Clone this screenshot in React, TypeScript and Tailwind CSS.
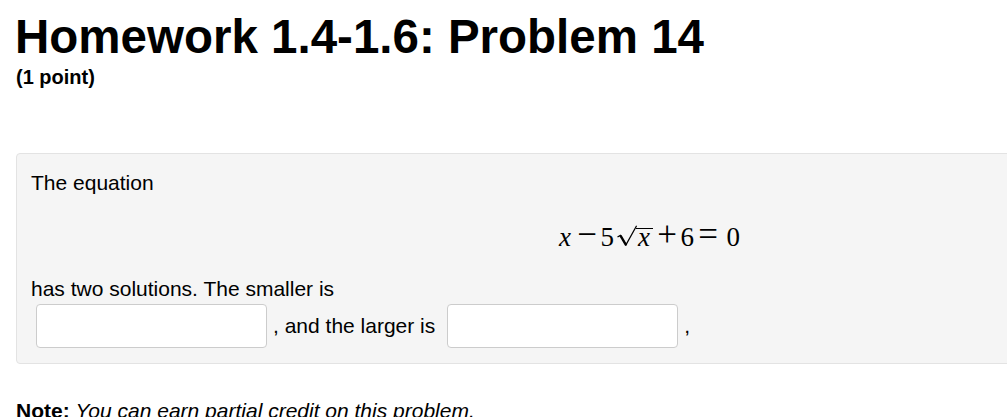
import React from "react";

const sans = { fontFamily: '"Liberation Sans", Arial, sans-serif' };

function Radical() {
  return (
    <svg width="20" height="21" viewBox="0 0 20 21" className="-mb-[2px] block">
      <path
        d="M0.5 12 L3.4 10.4 L9 19.8 L19.6 0.7"
        fill="none"
        stroke="#000"
        strokeWidth="1.3"
      />
      <path d="M3.5 10.6 L9.2 20.4" stroke="#000" strokeWidth="2.3" />
    </svg>
  );
}

// operators are set larger than the digits so they match the TeX glyph sizes
function Op({ children, className }: { children: React.ReactNode; className?: string }) {
  return (
    <span className={"inline-block w-[21px] text-center text-[35px] leading-[20px] " + (className ?? "")}>
      {children}
    </span>
  );
}

function Equation() {
  return (
    <div
      className="flex h-[34px] items-baseline justify-center text-[27px] leading-[34px] text-black"
      style={{ fontFamily: '"Liberation Serif", "Times New Roman", serif' }}
    >
      <span className="inline-block w-[13px] text-center italic">x</span>
      <Op className="ml-[5px]">−</Op>
      <span className="ml-[3px] inline-block w-[12px] text-center">5</span>
      <span className="ml-[4px] flex items-baseline">
        <Radical />
        <span className="-ml-[1px] inline-block w-[17px] border-t-[1.4px] border-black text-center leading-[17px] italic">
          x
        </span>
      </span>
      <Op className="ml-[4px]">+</Op>
      <span className="ml-[3px] inline-block w-[12px] text-center">6</span>
      <Op className="ml-[5px]">=</Op>
      <span className="ml-[8px] inline-block w-[12px] text-center">0</span>
    </div>
  );
}

function AnswerBox() {
  return (
    <input
      type="text"
      className="h-[44px] w-[231px] rounded-[4px] border border-[#cccccc] bg-white px-2 outline-none"
    />
  );
}

export default function App() {
  return (
    <div className="w-screen overflow-hidden bg-white text-black" style={sans}>
      <div className="pl-[16px] pt-[11px]">
        <h1 className="-ml-[1px] text-[47.5px] font-bold leading-[52px]">
          Homework 1.4-1.6: Problem 14
        </h1>
        <p className="mt-[2px] text-[20px] font-bold leading-[24px]">(1 point)</p>

        <div className="mt-[64px] w-[1265px] rounded-[4px] border border-[#e3e3e3] bg-[#f5f5f5] px-[14px] pb-[15px] pt-[14px] text-[21px] leading-[30px]">
          <p>The equation</p>
          <div className="mb-[20px] mt-[22px]">
            <Equation />
          </div>
          <p>has two solutions. The smaller is</p>
          <div className="flex items-center">
            <span className="ml-[5px]">
              <AnswerBox />
            </span>
            <span className="ml-[6px]">, and the larger is</span>
            <span className="ml-[12px]">
              <AnswerBox />
            </span>
            <span className="ml-[6px]">,</span>
          </div>
        </div>

        <p className="mt-[32px] text-[21px] leading-[30px]">
          <span className="font-bold">Note:</span>{" "}
          <span className="italic">You can earn partial credit on this problem.</span>
        </p>
      </div>
    </div>
  );
}
